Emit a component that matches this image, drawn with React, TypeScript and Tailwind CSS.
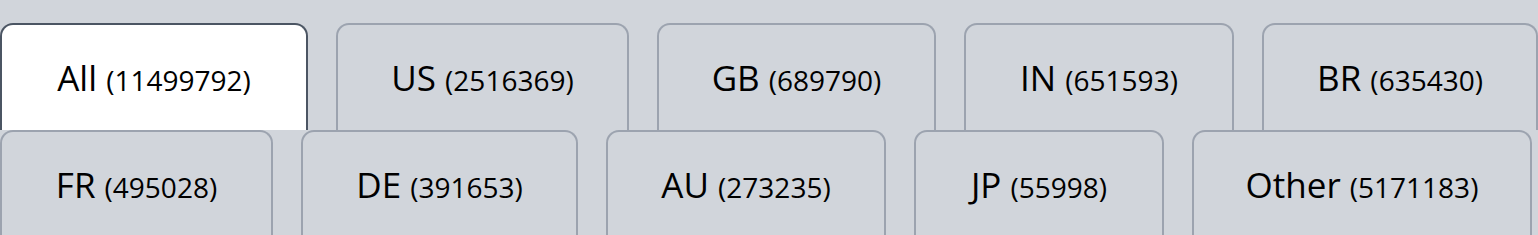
const rows = [
  [
    { code: 'All', count: 11499792, width: 'w-[308px]', active: true },
    { code: 'US', count: 2516369, width: 'w-[293px]' },
    { code: 'GB', count: 689790, width: 'w-[279px]' },
    { code: 'IN', count: 651593, width: 'w-[270px]' },
    { code: 'BR', count: 635430, width: 'w-[276px]' },
  ],
  [
    { code: 'FR', count: 495028, width: 'w-[273px]' },
    { code: 'DE', count: 391653, width: 'w-[277px]' },
    { code: 'AU', count: 273235, width: 'w-[280px]' },
    { code: 'JP', count: 55998, width: 'w-[250px]' },
    { code: 'Other', count: 5171183, width: 'w-[340px]' },
  ],
];

type Tab = { code: string; count: number; width: string; active?: boolean };

function CountryTab({ tab }: { tab: Tab }) {
  return (
    <button
      type="button"
      className={`${tab.width} flex h-[107px] shrink-0 items-center justify-center rounded-t-[13px] border-2 border-b-0 ${
        tab.active ? 'border-[#4b5563] bg-white' : 'border-[#9ca3af] bg-[#d1d5db]'
      }`}
    >
      <span className="text-[35px] leading-none text-black">
        {tab.code} <span className="text-[28px]">({tab.count})</span>
      </span>
    </button>
  );
}

export default function App() {
  return (
    <div
      className="h-[235px] w-[1538px] overflow-hidden bg-[#d1d5db] pt-[23px]"
      style={{ fontFamily: '"Segoe UI", "Open Sans", sans-serif' }}
    >
      {rows.map((row, i) => (
        <div key={i} className="flex gap-x-[28px]">
          {row.map((tab) => (
            <CountryTab key={tab.code} tab={tab} />
          ))}
        </div>
      ))}
    </div>
  );
}
